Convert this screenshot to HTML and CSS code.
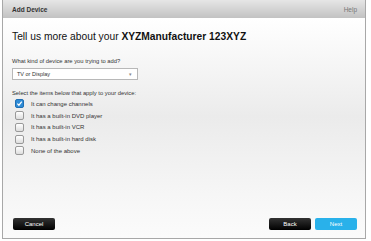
FILE: index.html
```html
<!DOCTYPE html>
<html>
<head>
<meta charset="utf-8">
<link rel="stylesheet" href="styles.css">
</head>
<body>
<div class="dialog">
  <div class="header">
    <span class="header-title">Add Device</span>
    <span class="header-help">Help</span>
  </div>
  <div class="body">
    <h1 class="title">Tell us more about your <b>XYZManufacturer 123XYZ</b></h1>
    <div class="label">What kind of device are you trying to add?</div>
    <div class="select">
      <span>TV or Display</span>
      <span class="arrow">&#9662;</span>
    </div>
    <div class="label label-items">Select the items below that apply to your device:</div>
    <ul class="options">
      <li><span class="cb checked"><svg viewBox="0 0 8 8" width="8" height="8"><path d="M1.5 4.2 L3.3 6 L6.6 1.8" fill="none" stroke="#fff" stroke-width="1.4"/></svg></span>It can change channels</li>
      <li><span class="cb"></span>It has a built-in DVD player</li>
      <li><span class="cb"></span>It has a built-in VCR</li>
      <li><span class="cb"></span>It has a built-in hard disk</li>
      <li><span class="cb"></span>None of the above</li>
    </ul>
    <div class="spacer"></div>
    <div class="footer">
      <button class="btn dark">Cancel</button>
      <div class="right">
        <button class="btn dark">Back</button>
        <button class="btn blue">Next</button>
      </div>
    </div>
  </div>
</div>
</body>
</html>
```
FILE: styles.css
```css
html, body { margin: 0; padding: 0; background: #fff; }
body { font-family: "Liberation Sans", Arial, sans-serif; color: #222; }
.dialog {
  width: 364px; height: 239px;
  margin-left: 2px;
  border: 1px solid #a8a8a8;
  border-top: none;
  box-sizing: border-box;
  display: flex; flex-direction: column;
}
.header {
  height: 17px;
  background: linear-gradient(#e6e6e6, #c2c2c2);
  display: flex; justify-content: space-between; align-items: center;
  padding: 1px 8px 0 9px;
  font-size: 6.5px;
}
.header-title { font-weight: bold; color: #333; }
.header-help { color: #777; }
.body {
  flex: 1;
  background: linear-gradient(#ffffff 0%, #ebebeb 45%, #f6f6f6 80%, #fbfbfb 100%);
  padding: 12px 8px 8px 9px;
  display: flex; flex-direction: column;
}
.title { margin: 0; font-size: 10.25px; font-weight: normal; color: #111; line-height: 13px; }
.title b { font-weight: bold; }
.label { font-size: 5.8px; color: #333; margin-top: 14px; line-height: 8px; }
.label-items { margin-top: 9px; }
.select {
  margin-top: 3px;
  width: 126px; height: 12px; box-sizing: border-box;
  border: 1px solid #b8b8b8; background: #fff;
  display: flex; justify-content: space-between; align-items: center;
  padding: 0 5px 0 4px;
  font-size: 5.5px; color: #333;
}
.arrow { color: #888; font-size: 5px; }
.options { list-style: none; margin: 1px 0 0 0; padding: 0; }
.options li { display: flex; align-items: center; height: 11.75px; font-size: 6px; color: #333; }
.cb {
  width: 7px; height: 7px; border: 1px solid #999; border-radius: 2px;
  background: linear-gradient(#fff, #ddd);
  margin: 0 7px 0 3px;
  display: inline-flex; align-items: center; justify-content: center;
}
.cb.checked { background: #2e8bd6; border-color: #1f6fb3; }
.cb svg { width: 7px; height: 7px; }
.spacer { flex: 1; }
.footer { display: flex; justify-content: space-between; align-items: center; padding: 0 0 0 1px; }
.right { display: flex; gap: 4px; }
.btn {
  width: 42px; height: 12px; border: none; border-radius: 2px;
  font-family: "Liberation Sans", Arial, sans-serif; font-size: 6px;
  color: #fff; padding: 0;
}
.btn.dark { background: linear-gradient(#333, #000); }
.btn.blue { background: #29b1ea; }
```
